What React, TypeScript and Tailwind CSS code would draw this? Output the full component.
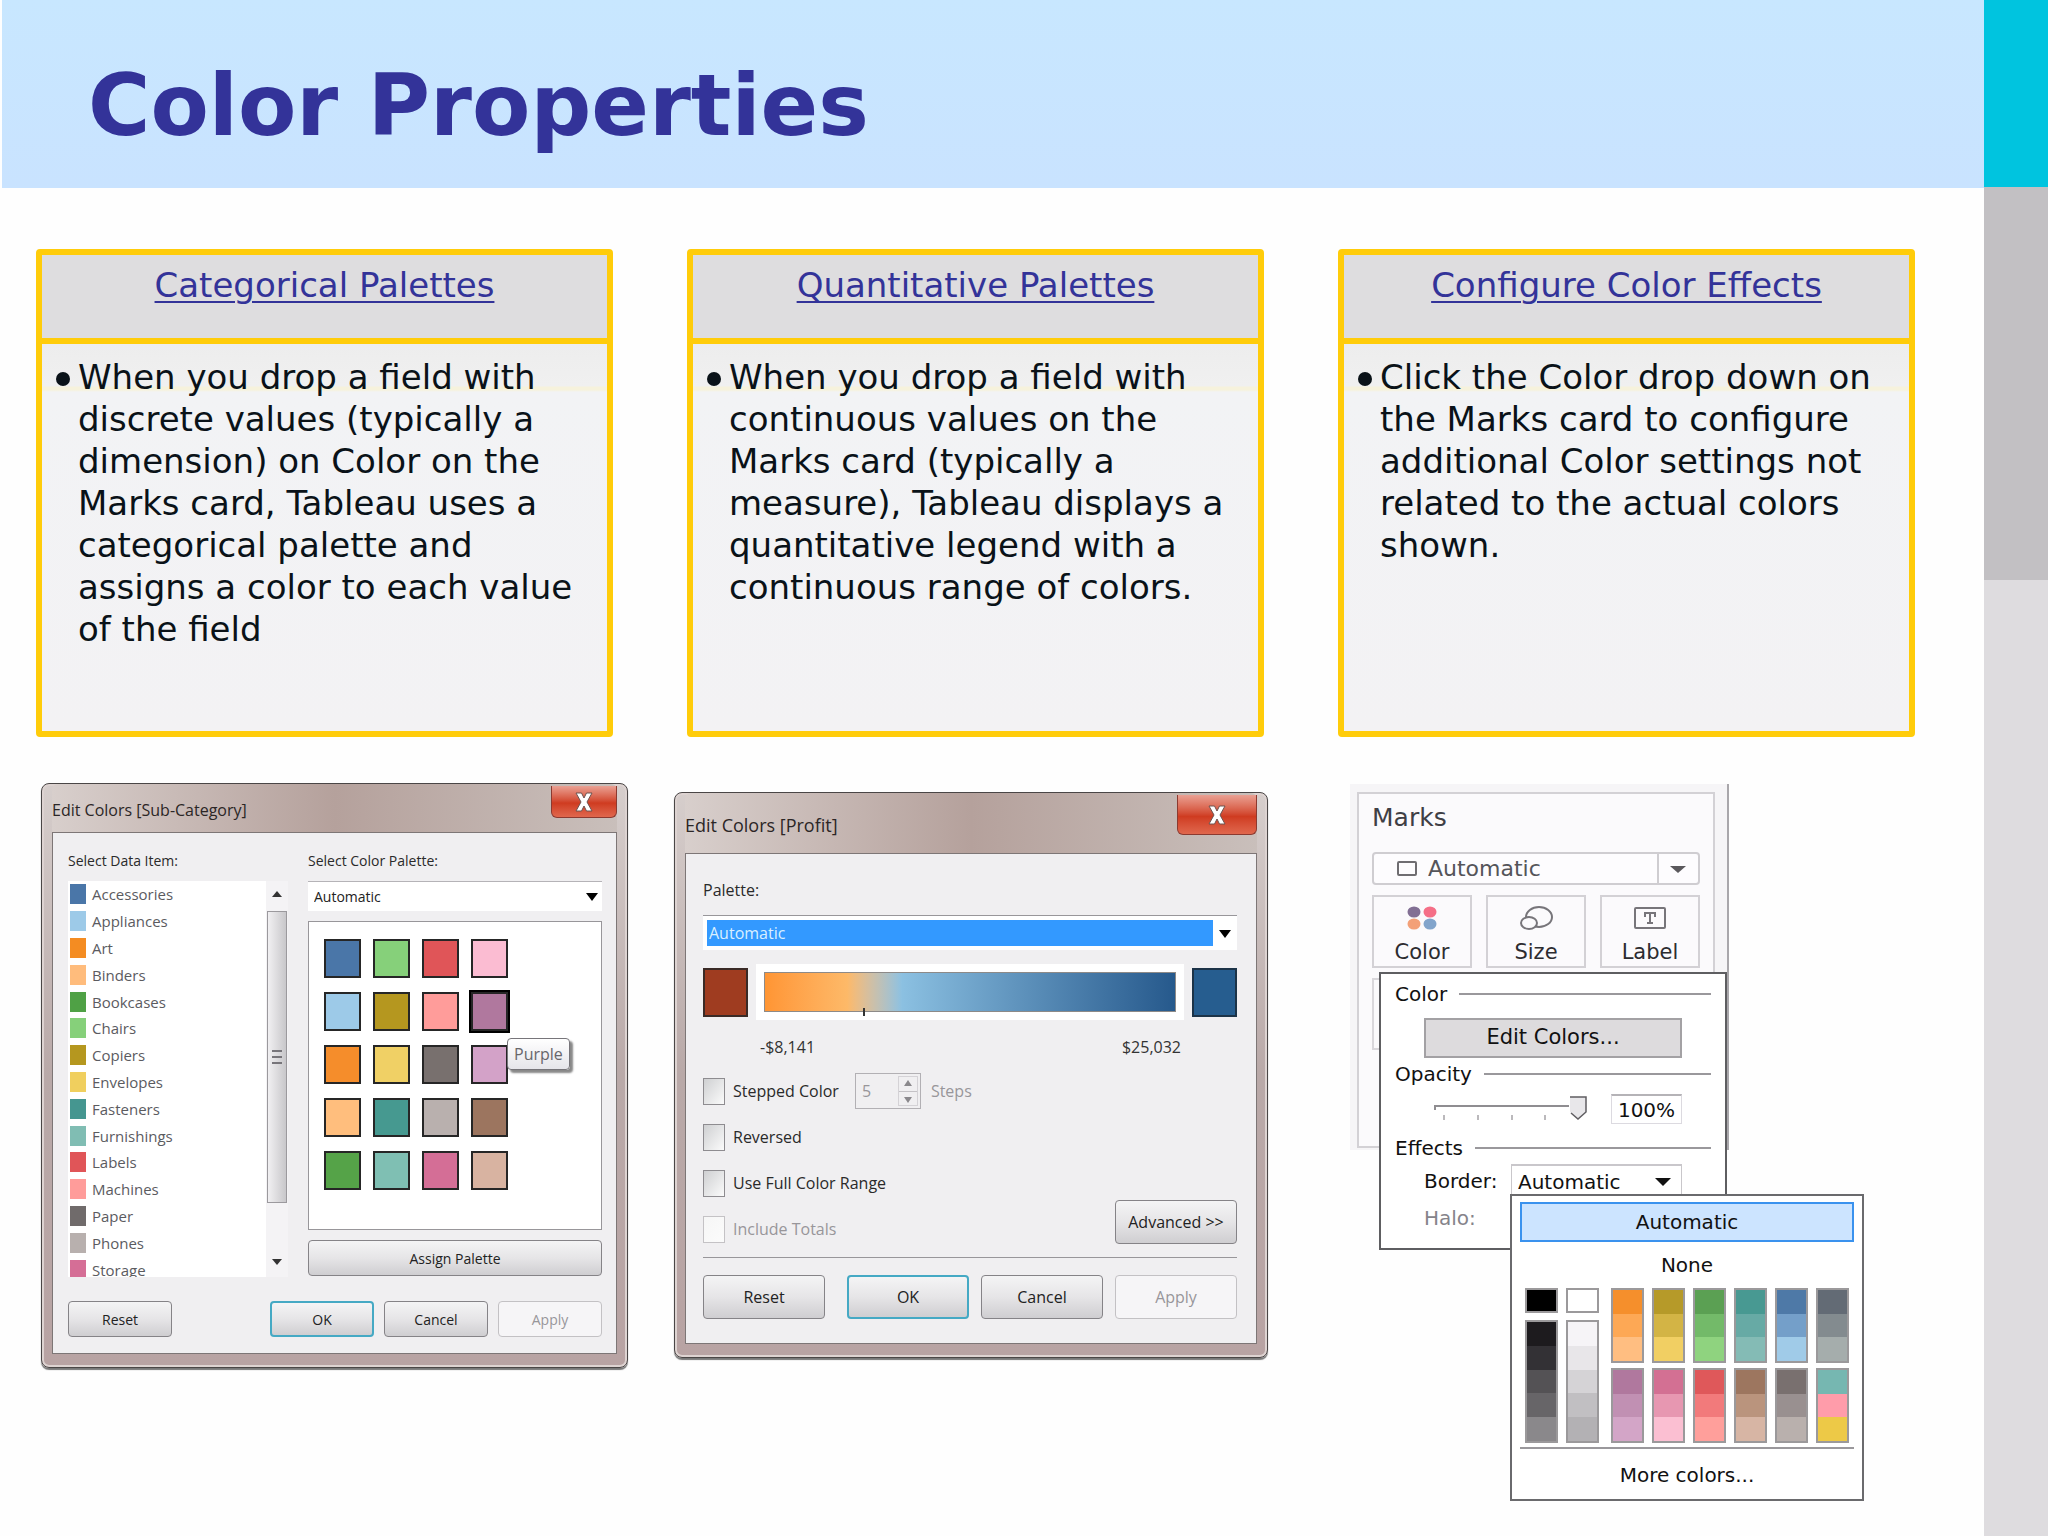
import type { ReactNode } from 'react';
import clsx from 'clsx';

const topics = [
  {
    title: 'Categorical Palettes',
    text: 'When you drop a field with discrete values (typically a dimension) on Color on the Marks card, Tableau uses a categorical palette and assigns a color to each value of the field',
  },
  {
    title: 'Quantitative Palettes',
    text: 'When you drop a field with continuous values on the Marks card (typically a measure), Tableau displays a quantitative legend with a continuous range of colors.',
  },
  {
    title: 'Configure Color Effects',
    text: 'Click the Color drop down on the Marks card to configure additional Color settings not related to the actual colors shown.',
  },
];

const dataItems = [
  { name: 'Accessories', color: 'bg-[#4a76a8]' },
  { name: 'Appliances', color: 'bg-[#9dcae8]' },
  { name: 'Art', color: 'bg-[#f48c22]' },
  { name: 'Binders', color: 'bg-[#ffbc7c]' },
  { name: 'Bookcases', color: 'bg-[#4fa145]' },
  { name: 'Chairs', color: 'bg-[#86d07a]' },
  { name: 'Copiers', color: 'bg-[#b5971f]' },
  { name: 'Envelopes', color: 'bg-[#f0cf5e]' },
  { name: 'Fasteners', color: 'bg-[#459690]' },
  { name: 'Furnishings', color: 'bg-[#80bdb3]' },
  { name: 'Labels', color: 'bg-[#e05558]' },
  { name: 'Machines', color: 'bg-[#ff9c9a]' },
  { name: 'Paper', color: 'bg-[#706b6b]' },
  { name: 'Phones', color: 'bg-[#b8b0ae]' },
  { name: 'Storage', color: 'bg-[#d56e96]' },
];

const palette = [
  { name: 'Blue', color: 'bg-[#4a76a8]' },
  { name: 'Light green', color: 'bg-[#86d07a]' },
  { name: 'Red', color: 'bg-[#e05558]' },
  { name: 'Pink', color: 'bg-[#fbbcd2]' },
  { name: 'Light blue', color: 'bg-[#9dcae8]' },
  { name: 'Olive', color: 'bg-[#b5971f]' },
  { name: 'Salmon', color: 'bg-[#ff9c9a]' },
  { name: 'Purple', color: 'bg-[#b0789e]' },
  { name: 'Orange', color: 'bg-[#f58d2b]' },
  { name: 'Yellow', color: 'bg-[#f0d065]' },
  { name: 'Dark gray', color: 'bg-[#78706e]' },
  { name: 'Light purple', color: 'bg-[#d3a2c8]' },
  { name: 'Light orange', color: 'bg-[#ffbe7d]' },
  { name: 'Teal', color: 'bg-[#469990]' },
  { name: 'Gray', color: 'bg-[#b9b0ae]' },
  { name: 'Brown', color: 'bg-[#9c755f]' },
  { name: 'Green', color: 'bg-[#55a348]' },
  { name: 'Light teal', color: 'bg-[#7fbfb3]' },
  { name: 'Magenta', color: 'bg-[#d46e96]' },
  { name: 'Tan', color: 'bg-[#d8b3a1]' },
];

const menuColumns = [
  [
    ['bg-[#f58f2c]', 'bg-[#fda855]', 'bg-[#ffbe81]'],
    ['bg-[#b0789e]', 'bg-[#c190b3]', 'bg-[#d3a5c7]'],
  ],
  [
    ['bg-[#b69a29]', 'bg-[#d3b445]', 'bg-[#f1cf63]'],
    ['bg-[#d37093]', 'bg-[#e797b1]', 'bg-[#fbbfd2]'],
  ],
  [
    ['bg-[#5ba053]', 'bg-[#73ba69]', 'bg-[#8fd37f]'],
    ['bg-[#df585a]', 'bg-[#f27a7b]', 'bg-[#ff9f9b]'],
  ],
  [
    ['bg-[#489992]', 'bg-[#67aaa5]', 'bg-[#84bbb5]'],
    ['bg-[#9d765f]', 'bg-[#ba947d]', 'bg-[#d7b5a4]'],
  ],
  [
    ['bg-[#4e79a7]', 'bg-[#749fc9]', 'bg-[#a0cbe8]'],
    ['bg-[#79706f]', 'bg-[#999090]', 'bg-[#b9b0ad]'],
  ],
  [
    ['bg-[#636b75]', 'bg-[#838b8f]', 'bg-[#a5adac]'],
    ['bg-[#76b7b1]', 'bg-[#ff9caa]', 'bg-[#edc947]'],
  ],
];

function Triangle({ up, className }: { up?: boolean; className?: string }) {
  return (
    <svg viewBox="0 0 12 8" preserveAspectRatio="none" className={className} aria-hidden="true">
      <path d={up ? 'M0 8 L6 0 L12 8 Z' : 'M0 0 L12 0 L6 8 Z'} fill="currentColor" />
    </svg>
  );
}

function TopicCard({ title, text }: { title: string; text: string }) {
  return (
    <article className="flex flex-col rounded-sm border-[6px] border-[#ffcc0a]">
      <h2 className="h-[89px] border-b-[6px] border-[#ffcc0a] bg-[#dedddf] pt-2 text-center text-[34px] leading-[44px]">
        <a href="#" className="text-[#333399] underline decoration-2 underline-offset-4">
          {title}
        </a>
      </h2>
      <div className="min-h-[387px] flex-1 bg-[linear-gradient(#ededed_0,#f0f0f0_42px,#f6f2dc_43px,#f6f2dc_46px,#f2f3f5_48px,#f3f2f4_100%)] pt-3">
        <ul className="list-none pr-3 pl-3.5">
          <li className="flex gap-2 text-[34px] leading-[42px] text-[#0a1218]">
            <span className="mt-4 size-3.5 shrink-0 rounded-full bg-[#0a1218]" />
            <span>{text}</span>
          </li>
        </ul>
      </div>
    </article>
  );
}

function DialogFrame({
  title,
  wide,
  children,
}: {
  title: string;
  wide?: boolean;
  children: ReactNode;
}) {
  return (
    <section
      aria-label={title}
      className={clsx(
        "rounded-lg border border-[#4a4646] bg-linear-to-b from-[#d6cecc] via-[#b9a9a8] to-[#b8a3a3] px-2.5 pb-[13px] font-['Open_Sans',sans-serif] shadow-[inset_0_0_0_2px_#ddd3d1,0_2px_1px_#777]",
        wide ? 'text-[16px]' : 'text-[14px]',
      )}
    >
      <header
        className={clsx(
          'flex items-start justify-between rounded-t-md bg-linear-to-r from-[#d8cfcc] via-[#b5a19c] to-[#c9bfbb]',
          wide ? 'h-[60px]' : 'h-12',
        )}
      >
        <h3
          className={clsx(
            'text-[#2b2626]',
            wide ? 'pt-5 text-[18px] leading-6' : 'pt-3.5 text-[16px] leading-6',
          )}
        >
          {title}
        </h3>
        <button
          type="button"
          aria-label="Close"
          className={clsx(
            'mt-0.5 flex items-center justify-center rounded-b-md border border-t-0 border-[#8c3a30] bg-linear-to-b from-[#e9a093] via-[#cf3b20] via-55% to-[#e0674d]',
            wide ? 'h-10 w-20' : 'h-8 w-[66px]',
          )}
        >
          <svg viewBox="0 0 18 20" className="h-5 w-[18px]" aria-hidden="true">
            <path
              d="M1 1h5.500L9 6l2.500-5H17l-5 9 5 9h-5.500L9 14l-2.500 5H1l5-9z"
              fill="#fff"
              stroke="#6d5451"
              strokeWidth="1"
            />
          </svg>
        </button>
      </header>
      <div
        className={clsx(
          'border border-[#7d7676] bg-[#f0eff1]',
          wide ? 'pt-6 pr-[19px] pb-6 pl-[17px]' : 'pt-[18px] pr-3.5 pb-4 pl-[15px]',
        )}
      >
        {children}
      </div>
    </section>
  );
}

function DialogButton({
  children,
  primary,
  disabled,
  className,
}: {
  children: ReactNode;
  primary?: boolean;
  disabled?: boolean;
  className?: string;
}) {
  return (
    <button
      type="button"
      disabled={disabled}
      className={clsx(
        'rounded border',
        disabled
          ? 'border-[#c3c1c4] bg-[#f6f5f7] text-[#98969a]'
          : 'bg-linear-to-b from-[#f4f4f5] via-[#e6e5e7] via-50% to-[#cfced1] text-[#222]',
        !disabled && (primary ? 'border-2 border-[#45a9c4]' : 'border-[#858387]'),
        className,
      )}
    >
      {children}
    </button>
  );
}

function SubCategoryDialog() {
  return (
    <DialogFrame title="Edit Colors [Sub-Category]">
      <div className="grid grid-cols-[220fr_294fr] gap-5">
        <div>
          <h4 className="text-[14px] leading-5 text-[#2a2a2a]">Select Data Item:</h4>
          <div className="mt-2.5 flex h-[396px]">
            <div className="flex-1 overflow-hidden bg-white">
              <ul className="grid h-[402px] auto-rows-fr">
                {dataItems.map((item) => (
                  <li
                    key={item.name}
                    className="flex items-center gap-1.5 pl-0.5 text-[15px] leading-5 text-[#5b5b5f]"
                  >
                    <span className={clsx('h-5 w-4', item.color)} />
                    {item.name}
                  </li>
                ))}
              </ul>
            </div>
            <div className="flex w-[22px] flex-col items-center bg-[#f4f3f5] text-[#333]">
              <Triangle up className="mt-2.5 h-1.5 w-2.5" />
              <div className="mt-3.5 flex h-[292px] w-5 flex-col items-center justify-center gap-1 border border-[#9b999d] bg-linear-to-r from-[#f1f0f2] to-[#c8c7ca]">
                <span className="h-0.5 w-2.5 bg-[#77757a]" />
                <span className="h-0.5 w-2.5 bg-[#77757a]" />
                <span className="h-0.5 w-2.5 bg-[#77757a]" />
              </div>
              <Triangle className="mt-auto mb-3 h-1.5 w-2.5" />
            </div>
          </div>
        </div>
        <div>
          <label htmlFor="category-palette" className="block leading-5 text-[#2a2a2a]">
            Select Color Palette:
          </label>
          <div className="relative mt-2.5">
            <select
              id="category-palette"
              className="h-[30px] w-full appearance-none border-t border-[#b5b3b7] bg-white pl-1.5 text-[#222]"
            >
              <option>Automatic</option>
            </select>
            <Triangle className="pointer-events-none absolute top-3 right-1 h-2 w-3 text-black" />
          </div>
          <div className="mt-2.5 h-[309px] border border-[#98969a] bg-white pt-[17px] pl-[15px]">
            <div className="grid grid-cols-[repeat(4,37px)] gap-x-3 gap-y-3.5">
              {palette.map(({ name, color }) => (
                <div key={name} className="relative h-[39px]">
                  <button
                    type="button"
                    aria-label={name}
                    className={clsx(
                      'block size-full border-2 border-[#262626]',
                      color,
                      name === 'Purple' && 'outline-2 outline-black',
                    )}
                  />
                  {name === 'Purple' && (
                    <span
                      role="tooltip"
                      className="absolute top-[46px] left-9 z-10 rounded-sm border border-[#77757a] bg-linear-to-b from-white to-[#e6e5ea] px-1.5 text-[16px] leading-[30px] text-[#68666b] shadow-[3px_3px_2px_#888]"
                    >
                      Purple
                    </span>
                  )}
                </div>
              ))}
            </div>
          </div>
          <DialogButton className="mt-2.5 h-9 w-full">Assign Palette</DialogButton>
        </div>
      </div>
      <div className="mt-6 flex gap-2.5">
        <DialogButton className="mr-auto h-9 w-[104px]">Reset</DialogButton>
        <DialogButton primary className="h-9 w-[104px]">
          OK
        </DialogButton>
        <DialogButton className="h-9 w-[104px]">Cancel</DialogButton>
        <DialogButton disabled className="h-9 w-[104px]">
          Apply
        </DialogButton>
      </div>
    </DialogFrame>
  );
}

function CheckRow({
  label,
  disabled,
  children,
}: {
  label: string;
  disabled?: boolean;
  children?: ReactNode;
}) {
  return (
    <div className="flex h-[46px] items-center">
      <label className={clsx('flex items-center gap-2', disabled ? 'text-[#98969a]' : 'text-[#2a2a2a]')}>
        <input
          type="checkbox"
          disabled={disabled}
          className={clsx(
            'h-[27px] w-[22px] appearance-none border bg-linear-to-br to-[#fbfbfb]',
            disabled ? 'border-[#c4c2c5] from-[#f6f6f6]' : 'border-[#8e8c90] from-[#cfd0d2]',
          )}
        />
        {label}
      </label>
      {children}
    </div>
  );
}

function ProfitDialog() {
  return (
    <DialogFrame title="Edit Colors [Profit]" wide>
      <label htmlFor="profit-palette" className="block leading-6 text-[#2a2a2a]">
        Palette:
      </label>
      <div className="relative mt-[13px] flex h-[35px] border-t border-[#98969a] bg-white py-1 pr-6 pl-1">
        <select
          id="profit-palette"
          className="w-full appearance-none bg-[#3399ff] pl-0.5 text-[#d9efff]"
        >
          <option>Automatic</option>
        </select>
        <Triangle className="pointer-events-none absolute top-3.5 right-1.5 h-2 w-3 text-black" />
      </div>
      <div className="mt-3.5 flex items-center gap-2">
        <button type="button" aria-label="Start color" className="h-[49px] w-[45px] border-2 border-[#3a2a26] bg-[#9f3c20]" />
        <div className="relative flex-1 bg-white p-2">
          <div className="h-10 border border-[#8d8a88] bg-linear-to-r from-[#ff9533] via-[#8cc1e2] via-33% to-[#26598c]">
            <div className="h-full w-1/3 bg-linear-to-r from-[#ff9533] via-[#fdb968] via-60% to-[#8cc1e2]" />
          </div>
          <span className="absolute bottom-1 left-1/4 h-2 w-0.5 bg-[#333]" />
        </div>
        <button type="button" aria-label="End color" className="h-[49px] w-[45px] border-2 border-[#1c3348] bg-[#265d8f]" />
      </div>
      <div className="mt-[15px] flex justify-between pr-14 pl-[57px] leading-6 text-[#333]">
        <span>-$8,141</span>
        <span>$25,032</span>
      </div>
      <div className="mt-[9px] flex items-end justify-between">
        <div>
          <CheckRow label="Stepped Color">
            <div className="ml-4 flex h-9 w-[66px] items-center border border-[#b2b0b4] p-0.5">
              <input
                type="text"
                defaultValue="5"
                disabled
                aria-label="Number of steps"
                className="w-10 min-w-0 flex-1 pl-1 text-[#98969a]"
              />
              <div className="flex h-full w-5 flex-col items-center justify-around border border-[#d4d2d6] text-[#8a888c]">
                <Triangle up className="h-1.5 w-2" />
                <span className="h-px w-full bg-[#c4c2c6]" />
                <Triangle className="h-1.5 w-2" />
              </div>
            </div>
            <span className="ml-2.5 text-[#98969a]">Steps</span>
          </CheckRow>
          <CheckRow label="Reversed" />
          <CheckRow label="Use Full Color Range" />
          <CheckRow label="Include Totals" disabled />
        </div>
        <DialogButton className="mb-2 h-11 w-[122px]">Advanced &gt;&gt;</DialogButton>
      </div>
      <hr className="mt-[5px] border-[#98969a]" />
      <div className="mt-[17px] flex gap-3">
        <DialogButton className="mr-auto h-11 w-[122px]">Reset</DialogButton>
        <DialogButton primary className="h-11 w-[122px]">
          OK
        </DialogButton>
        <DialogButton className="h-11 w-[122px]">Cancel</DialogButton>
        <DialogButton disabled className="h-11 w-[122px]">
          Apply
        </DialogButton>
      </div>
    </DialogFrame>
  );
}

function MarkButton({ label, children }: { label: string; children: ReactNode }) {
  return (
    <button
      type="button"
      className="flex h-[73px] flex-col items-center justify-between border-2 border-[#d3d1d5] pt-2 pb-0.5 text-[21px] leading-6 text-[#2c2c30]"
    >
      <svg viewBox="0 0 34 26" className="h-[26px] w-[34px]" fill="none" aria-hidden="true">
        {children}
      </svg>
      {label}
    </button>
  );
}

function SectionTitle({ children }: { children: ReactNode }) {
  return (
    <h4 className="flex items-center gap-3 leading-6">
      {children}
      <span className="h-0.5 flex-1 bg-[#9a989c]" />
    </h4>
  );
}

function SwatchStack({ colors, className }: { colors: string[]; className?: string }) {
  return (
    <div className={clsx('flex flex-col border-2 border-[#9b999b]', className)}>
      {colors.map((color) => (
        <button key={color} type="button" aria-label="Border color" className={clsx('flex-1', color)} />
      ))}
    </div>
  );
}

function BorderMenu() {
  return (
    <div className="absolute top-[410px] left-[160px] w-[354px] border-2 border-[#6a6a6d] bg-white px-2 pt-1.5 pb-2 text-center text-[20px] text-[#111]">
      <button type="button" className="block h-10 w-full border-2 border-[#3a92ee] bg-[#cce4ff]">
        Automatic
      </button>
      <button type="button" className="block h-[46px] w-full">
        None
      </button>
      <div className="flex justify-between px-[5px]">
        <div className="flex gap-2">
          <div className="flex flex-col gap-[7px]">
            <SwatchStack colors={['bg-black']} className="h-[25px] w-[33px]" />
            <SwatchStack
              colors={['bg-[#1d1b1e]', 'bg-[#333135]', 'bg-[#545255]', 'bg-[#676568]', 'bg-[#8a888b]']}
              className="h-[123px] w-[33px]"
            />
          </div>
          <div className="flex flex-col gap-[7px]">
            <SwatchStack colors={['bg-white']} className="h-[25px] w-[33px]" />
            <SwatchStack
              colors={['bg-[#f6f4f7]', 'bg-[#e8e6e9]', 'bg-[#d5d3d6]', 'bg-[#c1bfc2]', 'bg-[#b3b1b4]']}
              className="h-[123px] w-[33px]"
            />
          </div>
        </div>
        <div className="flex gap-2">
          {menuColumns.map((column) => (
            <div key={column[0][0]} className="flex flex-col gap-[5px]">
              {column.map((colors) => (
                <SwatchStack key={colors[0]} colors={colors} className="h-[75px] w-[33px]" />
              ))}
            </div>
          ))}
        </div>
      </div>
      <hr className="mt-1 border-t-2 border-[#9a989c]" />
      <button type="button" className="block h-[42px] w-full pt-2.5">
        More colors...
      </button>
    </div>
  );
}

function ColorPopup() {
  return (
    <div className="absolute top-[188px] left-[29px] h-[278px] w-[348px] border-2 border-[#5e5e61] bg-white px-3.5 pt-2 text-[20px] text-[#111]">
      <SectionTitle>Color</SectionTitle>
      <div className="px-[29px] pt-3">
        <button type="button" className="h-10 w-full border-2 border-[#a3a1a4] bg-[#dddbdd] text-[21px]">
          Edit Colors...
        </button>
      </div>
      <div className="mt-1">
        <SectionTitle>Opacity</SectionTitle>
      </div>
      <div className="mt-2 flex items-center justify-between pr-[29px] pl-[38px]">
        <div className="relative w-[154px]">
          <svg viewBox="0 0 154 30" className="block h-[30px] w-full" fill="none" aria-hidden="true">
            <path d="M2 16v-4h134" stroke="#8f8d91" strokeWidth="2" />
            <path d="M11 21v5M45 21v5M79 21v5M112 21v5" stroke="#a5a3a7" strokeWidth="1.500" />
            <path d="M137 3h16v15l-8 7-8-7z" fill="#e8e7ea" />
            <path d="M137 3h16v15l-8 7-7-6" stroke="#5f5d61" strokeWidth="1.500" />
          </svg>
          <input
            type="range"
            aria-label="Opacity"
            defaultValue={100}
            className="absolute inset-0 w-full opacity-0"
          />
        </div>
        <input
          type="text"
          aria-label="Opacity percent"
          defaultValue="100%"
          className="h-[30px] w-[71px] border border-t-2 border-[#dcdae0] border-t-[#b5b3b7] text-center"
        />
      </div>
      <div className="mt-3">
        <SectionTitle>Effects</SectionTitle>
      </div>
      <div className="relative mt-1 flex items-center justify-between pr-[29px] pl-[29px]">
        <label htmlFor="border-color">Border:</label>
        <select
          id="border-color"
          className="h-[34px] w-[171px] appearance-none border border-t-2 border-[#c9c7cb] bg-white pl-1.5"
        >
          <option>Automatic</option>
        </select>
        <Triangle className="pointer-events-none absolute top-3.5 right-10 h-2 w-4" />
      </div>
      <p className="mt-2 pl-[29px] leading-6 text-[#85838a]">Halo:</p>
    </div>
  );
}

function MarksCard() {
  return (
    <section
      aria-label="Marks card"
      className="relative font-['DejaVu_Sans',Verdana,sans-serif]"
    >
      <div className="h-[366px] w-[379px] border-r-2 border-[#a9a7ab] bg-[#f6f5f7] pt-2 pr-3 pl-[7px]">
        <div className="h-[356px] border-2 border-[#d3d1d5] bg-[#fbfafc] px-[13px] pt-2.5">
          <h3 className="text-[25px] leading-7 text-[#3f3f45]">Marks</h3>
          <div className="relative mt-5">
            <select
              aria-label="Mark type"
              className="h-[33px] w-full appearance-none rounded-sm border-2 border-[#cfcdd1] bg-[#fdfcfe] pl-[54px] text-[22px] leading-7 text-[#55555a]"
            >
              <option>Automatic</option>
            </select>
            <span className="pointer-events-none absolute top-[9px] left-[25px] h-[15px] w-5 rounded-xs border-2 border-[#6f6d71]" />
            <span className="pointer-events-none absolute inset-y-0 right-[41px] w-0.5 bg-[#cfcdd1]" />
            <Triangle className="pointer-events-none absolute top-3.5 right-3.5 h-[7px] w-4 text-[#5a585c]" />
          </div>
          <div className="mt-2.5 grid grid-cols-3 gap-3.5">
            <MarkButton label="Color">
              <ellipse cx="9" cy="7" rx="6.500" ry="5.500" fill="#826f94" />
              <ellipse cx="25" cy="7" rx="6.500" ry="5.500" fill="#f56f87" />
              <ellipse cx="9" cy="19" rx="6.500" ry="5.500" fill="#f3a078" />
              <ellipse cx="25" cy="19" rx="6.500" ry="5.500" fill="#82a4cb" />
            </MarkButton>
            <MarkButton label="Size">
              <ellipse cx="20" cy="12" rx="13" ry="10" stroke="#77757a" strokeWidth="2" />
              <ellipse cx="10" cy="18" rx="8" ry="6" fill="#fbfafc" stroke="#77757a" strokeWidth="2" />
            </MarkButton>
            <MarkButton label="Label">
              <rect x="2" y="3" width="30" height="20" rx="1" stroke="#77757a" strokeWidth="2" />
              <path d="M12 12V8h10v4M17 8v10M14 18h6" stroke="#77757a" strokeWidth="2" />
            </MarkButton>
          </div>
          <div className="mt-2.5 h-[72px] border-2 border-[#d9d7db]" />
        </div>
      </div>
      <ColorPopup />
      <BorderMenu />
    </section>
  );
}

export default function App() {
  return (
    <div className="flex min-h-screen bg-[#fefefe] font-['DejaVu_Sans',Verdana,sans-serif]">
      <main className="min-w-0 flex-1">
        <header className="ml-0.5 h-[188px] bg-linear-to-b from-[#c8e7ff] to-[#c9e3ff] pt-14 pl-[86px]">
          <h1 className="text-[85px] leading-[100px] font-bold text-[#333399]">Color Properties</h1>
        </header>
        <div className="grid grid-cols-3 gap-[74px] pt-[61px] pr-[69px] pl-9">
          {topics.map((topic) => (
            <TopicCard key={topic.title} {...topic} />
          ))}
        </div>
        <div className="flex items-start pt-[46px] pr-[120px] pl-[41px]">
          <div className="flex-[587]">
            <SubCategoryDialog />
          </div>
          <div className="mt-[9px] ml-[46px] flex-[594]">
            <ProfitDialog />
          </div>
          <div className="mt-px ml-[82px] flex-[514]">
            <MarksCard />
          </div>
        </div>
      </main>
      <aside className="flex w-16 flex-col">
        <div className="h-[187px] bg-[#00c4df]" />
        <div className="h-[393px] bg-[#c2c0c3]" />
        <div className="flex-1 bg-[#dedcdf]" />
      </aside>
    </div>
  );
}
